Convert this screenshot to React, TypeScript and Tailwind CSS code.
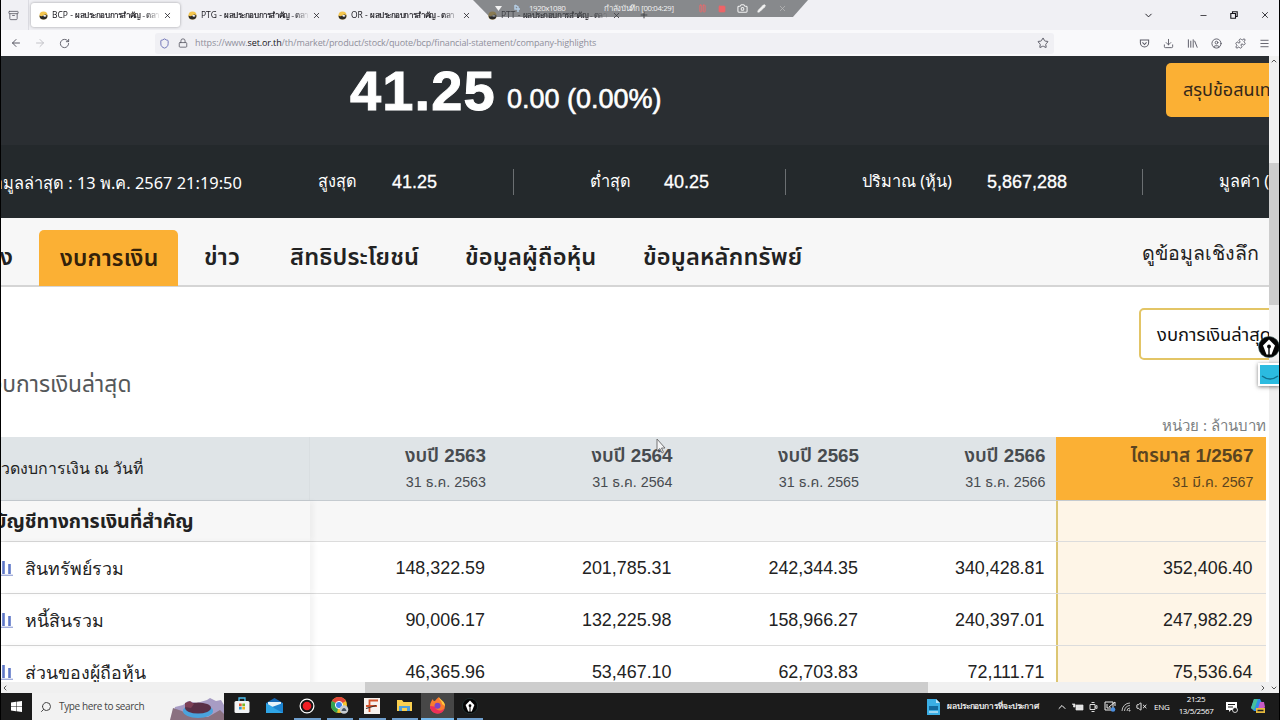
import { ReactNode } from 'react';
import {
  ArrowLeft, ArrowRight, RotateCw, Shield, Lock, Star, X, Plus, Minus, ChevronDown, ChevronUp,
  ChevronLeft, ChevronRight, Pause, Square, Camera, Pencil, Download, CircleUser, Puzzle, Menu, Search,
  Archive, VolumeX,
} from 'lucide-react';

const TABS = [
  { name: 'BCP', width: 'w-[149px]' },
  { name: 'PTG', width: 'w-[150px]' },
  { name: 'OR', width: 'w-[150px]' },
  { name: 'PTT', width: 'w-[150px]' },
];

const YEARS = ['2563', '2564', '2565', '2566'];

const ROWS = [
  { label: 'สินทรัพย์รวม', values: ['148,322.59', '201,785.31', '242,344.35', '340,428.81'], latest: '352,406.40' },
  { label: 'หนี้สินรวม', values: ['90,006.17', '132,225.98', '158,966.27', '240,397.01'], latest: '247,982.29' },
  { label: 'ส่วนของผู้ถือหุ้น', values: ['46,365.96', '53,467.10', '62,703.83', '72,111.71'], latest: '75,536.64' },
];

function SetLogo() {
  return (
    <svg className="shrink-0" width="9" height="9" viewBox="0 0 18 18">
      <circle cx="9" cy="9" r="8" fill="#f4c64e" />
      <path d="M1 9c3 3 7 1 9-1s5-1 7 1a8 8 0 0 1-16 0z" fill="#2b2a29" />
      <path d="M8 9c2-2 6-1 7 1-2 2-5 2-7-1z" fill="#fff" />
    </svg>
  );
}

function PenBadge({ size }: { size: number }) {
  return (
    <svg className="shrink-0" width={size} height={size} viewBox="0 0 22 22">
      <circle cx="11" cy="11" r="10.500" fill="#050505" stroke="#3b5a5a" strokeWidth=".6" />
      <path d="M11 3.500l6 6-3.500 9h-5L5 9.500z" fill="#fff" />
      <path d="M11 11v8" stroke="#050505" strokeWidth="1.400" />
      <circle cx="11" cy="10.500" r="1.900" fill="#050505" />
    </svg>
  );
}

function BrowserTabs() {
  return (
    <div className="relative flex h-[30px] shrink-0 items-center bg-[#f0f0f4] text-[#15141a]">
      <div className="flex h-[30px] w-[28px] shrink-0 items-center border-r border-[#dcdce2] pl-[7px]">
        <Archive size={11} strokeWidth={1.8} className="text-[#5b5b66]" />
      </div>
      {TABS.map((tab, index) => (
        <div
          key={tab.name}
          className={`${tab.width} flex h-[24px] shrink-0 items-center rounded-[3px] pl-[8px] ${index === 0 ? 'ml-[2px] bg-white shadow-[0_0_3px_rgba(0,0,0,0.35)]' : ''}`}
        >
          <SetLogo />
          <span className="ml-[4px] w-[111px] whitespace-nowrap font-['Open_Sans','Noto_Sans',sans-serif] text-[8.5px] [mask-image:linear-gradient(90deg,#000_82%,transparent_98%)]">
            {tab.name} - <span className="text-[8px] tracking-[-0.45px] [-webkit-text-stroke:0.2px_currentColor]">ผลประกอบการสำคัญ - ตลา</span>
          </span>
          <X size={9} strokeWidth={2} className="shrink-0" />
        </div>
      ))}
      <Plus size={10} className="ml-[9px]" />
      <div className="flex flex-1 items-center justify-end pr-[9px]">
        <ChevronDown size={11} className="mr-[45px]" />
        <Minus size={9} className="mr-[22px]" />
        <svg className="mr-[22px]" width="8" height="8" viewBox="0 0 8 8" fill="none" stroke="currentColor" strokeWidth="1.100">
          <path d="M.8 2.500h4.700v4.700H.8zM2.500 2.500V.8h4.700v4.700H5.500" />
        </svg>
        <X size={10} />
      </div>

      {/* Recorder overlay */}
      <div className="absolute left-[472px] top-0 flex h-[17px] w-[335px] items-center bg-[#4e5254]/65 pl-[22px] text-[#f2f2f2] [clip-path:polygon(0_0,100%_0,95.5%_100%,5%_100%)]">
        <svg className="shrink-0" width="8" height="5" viewBox="0 0 8 5"><path d="M0 0h7L3.500 5z" fill="#f2f2f2" /></svg>
        <svg className="ml-[11px] shrink-0" width="7" height="9" viewBox="0 0 7 9"><path d="M1 1l3 2v5M1 1v4h5" stroke="#b4cde4" fill="none" strokeWidth="1.500" /></svg>
        <span className="ml-[8px] w-[75px] shrink-0 pb-px font-['Open_Sans',sans-serif] text-[8px] tracking-[-0.5px]">1920x1080</span>
        <span className="w-[94px] shrink-0 whitespace-nowrap font-['Open_Sans','Noto_Sans',sans-serif] text-[7.8px] tracking-[-0.35px]">กำลังบันทึก [00:04:29]</span>
        <Pause size={9} className="shrink-0 text-[#e86b6d]" strokeWidth={2.5} />
        <Square size={8} className="ml-[11px] shrink-0 fill-[#ed6468] text-[#ed6468]" />
        <Camera size={11} className="ml-[11px] shrink-0" strokeWidth={2.3} />
        <Pencil size={9} className="ml-[9px] shrink-0 fill-current" />
        <X size={9} className="ml-[12px] shrink-0 text-[#b9b9b9]" />
      </div>
    </div>
  );
}

function AddressBar() {
  return (
    <div className="flex h-[26px] shrink-0 items-center bg-[#f9f9fb] text-[#5b5b66]">
      <ArrowLeft size={12} className="ml-[9px]" />
      <ArrowRight size={12} className="ml-[12px] text-[#c3c3c8]" />
      <RotateCw size={11} className="ml-[13px]" />
      <div className="ml-[85px] flex h-[21px] w-[899px] shrink-0 items-center rounded-[3px] bg-[#f0f0f4] pl-[4px]">
        <Shield size={11} className="text-[#6a6fb5]" />
        <Lock size={10} className="ml-[8px]" />
        <span className="ml-[7px] flex-1 whitespace-nowrap font-['Open_Sans',sans-serif] text-[9px] tracking-[-0.12px] text-[#8f8f9b]">
          https://www.<span className="text-[#15141a]">set.or.th</span>/th/market/product/stock/quote/bcp/financial-statement/company-highlights
        </span>
        <Star size={12} className="mr-[5px]" />
      </div>
      <div className="flex flex-1 items-center justify-end gap-[13px] pr-[9px]">
        <svg width="11" height="11" viewBox="0 0 16 16" fill="none" stroke="currentColor" strokeWidth="1.500"><path d="M2 3h12v4a6 6 0 0 1-12 0zM5 6.500l3 3 3-3" /></svg>
        <Download size={11} />
        <svg width="11" height="11" viewBox="0 0 16 16" fill="none" stroke="currentColor" strokeWidth="1.400"><path d="M2 2v12M5.500 4v10M9 2v12M11 4l4 10" /></svg>
        <CircleUser size={11} />
        <Puzzle size={11} />
        <Menu size={11} />
      </div>
    </div>
  );
}

interface StatProps {
  label: string;
  value: string;
  labelWidth: string;
  width: string;
  pad?: string;
}

function Stat({ label, value, labelWidth, width, pad = '' }: StatProps) {
  return (
    <div className={`${width} ${pad} flex h-[26px] shrink-0 items-center border-r border-[#6b6f72]`}>
      <span className={`${labelWidth} shrink-0`}>{label}</span>
      <span className="pt-[2px] font-['Liberation_Sans',sans-serif] text-[18px] [-webkit-text-stroke:0.3px_#fff]">{value}</span>
    </div>
  );
}

function Quote() {
  return (
    <div className="h-[162px] shrink-0 bg-[#24292c] text-white">
      <div className="flex h-[89px] bg-[#2a2e32]">
        <div className="flex w-[1165px] shrink-0 items-baseline pl-[349px] pt-px">
          <span className="w-[157px] font-['Liberation_Sans',sans-serif] text-[56px] font-bold leading-[68px] tracking-[1.1px] [-webkit-text-stroke:1px_#fff]">41.25</span>
          <span className="relative top-[-2px] whitespace-nowrap font-['Liberation_Sans',sans-serif] text-[27px] [-webkit-text-stroke:0.6px_#fff]">0.00 (0.00%)</span>
        </div>
        <div className="mt-[7px] h-[54px] w-[180px] shrink-0 rounded-[5px] bg-[#fbb034] pl-[17px] text-[18px] leading-[52px] text-[#33271a]">
          สรุปข้อสนเทศ
        </div>
      </div>
      <div className="flex h-[73px] items-center whitespace-nowrap font-['Noto_Sans',sans-serif] text-[16.3px]">
        <div className="flex w-[317px] shrink-0 pt-[3px] text-[16.4px]">
          <span className="ml-[-19px]">ข้อมูลล่าสุด : 13 พ.ค. 2567 21:19:50</span>
        </div>
        <Stat label="สูงสุด" value="41.25" labelWidth="w-[74px]" width="w-[196px]" />
        <Stat label="ต่ำสุด" value="40.25" labelWidth="w-[74px]" width="w-[196px]" pad="ml-[76px]" />
        <Stat label="ปริมาณ (หุ้น)" value="5,867,288" labelWidth="w-[125px]" width="w-[281px]" pad="ml-[76px]" />
        <span className="ml-[76px]">มูลค่า (บาท)</span>
      </div>
    </div>
  );
}

function SectionNav() {
  return (
    <div className="flex h-[69px] shrink-0 items-end whitespace-nowrap border-b-2 border-[#d5d5d5] bg-[#f7f7f7] text-[23.6px] font-semibold tracking-[0.2px] text-[#222]">
      <div className="flex h-[56px] w-[38px] shrink-0 items-center justify-end pr-[26px]">ย้อนหลัง</div>
      <div className="-mb-px flex h-[56px] w-[139px] shrink-0 items-center rounded-t-[5px] bg-[#fbb034] pb-[2px] pl-[21px] text-[23px] text-[#33210a]">งบการเงิน</div>
      <div className="flex h-[56px] w-[112px] shrink-0 items-center pl-[26px]">ข่าว</div>
      <div className="flex h-[56px] w-[175px] shrink-0 items-center">สิทธิประโยชน์</div>
      <div className="flex h-[56px] w-[178px] shrink-0 items-center">ข้อมูลผู้ถือหุ้น</div>
      <div className="flex h-[56px] w-[499px] shrink-0 items-center">ข้อมูลหลักทรัพย์</div>
      <div className="flex h-[64px] shrink-0 items-center font-['Noto_Sans',sans-serif] text-[19.6px] font-normal tracking-normal">ดูข้อมูลเชิงลึก</div>
    </div>
  );
}

function Cell({ children, className = '' }: { children?: ReactNode; className?: string }) {
  return <div className={`flex w-[186.5px] shrink-0 flex-col items-end justify-center ${className}`}>{children}</div>;
}

function Statement() {
  return (
    <div className="flex h-[395px] shrink-0 flex-col overflow-hidden bg-white text-[#222]">
      <div className="flex h-[73px] shrink-0 items-end">
        <div className="ml-[1138px] flex h-[52px] w-[160px] shrink-0 items-center whitespace-nowrap rounded-[5px] border-2 border-[#e3c566] pl-[16px] text-[18.4px] text-[#111]">
          งบการเงินล่าสุด
        </div>
      </div>
      <div className="ml-[-11px] flex h-[52px] shrink-0 items-center whitespace-nowrap pb-[4px] text-[22.8px] text-[#55585a]">งบการเงินล่าสุด</div>
      <div className="flex h-[25px] shrink-0 items-center justify-end pr-[3px] pt-px font-['Noto_Sans',sans-serif] text-[15px] text-[#7b7f82]">หน่วย : ล้านบาท</div>

      {/* Financial table */}
      <div className="flex h-[64px] w-[1265px] shrink-0 whitespace-nowrap border-b border-[#c5cbd0] bg-[#dfe4e7] font-['Liberation_Sans','Noto_Sans_Thai',sans-serif]">
        <div className="flex w-[309px] shrink-0 items-center border-r border-[#d9dee1] font-['Noto_Sans',sans-serif] text-[15.9px]">
          <span className="ml-[-8px]">งวดงบการเงิน ณ วันที่</span>
        </div>
        {YEARS.map((year) => (
          <Cell key={year} className="pr-[10.5px] text-[#474b4f]">
            <div className="text-[18.8px] font-semibold leading-[28px]">งบปี {year}</div>
            <div className="text-[14.3px] leading-[25px]">31 ธ.ค. {year}</div>
          </Cell>
        ))}
        <div className="flex flex-1 flex-col items-end justify-center bg-[#fbb034] pr-[12.5px] text-[#5a4420]">
          <div className="text-[19px] font-semibold leading-[28px]">ไตรมาส 1/2567</div>
          <div className="text-[14.3px] leading-[25px]">31 มี.ค. 2567</div>
        </div>
      </div>
      <div className="flex h-[41px] w-[1265px] shrink-0 border-b border-[#dcdcdc] bg-[#f7f7f7]">
        <div className="flex w-[309px] shrink-0 items-center whitespace-nowrap shadow-[4px_0_5px_rgba(0,0,0,0.04)]">
          <span className="ml-[-7px] text-[19.6px] font-bold">บัญชีทางการเงินที่สำคัญ</span>
        </div>
        <div className="w-[746px] shrink-0" />
        <div className="flex-1 border-l-2 border-[#dcc672] bg-[#fef5e7]" />
      </div>
      {ROWS.map((row) => (
        <div key={row.label} className="flex h-[52px] w-[1265px] shrink-0 border-b border-[#dcdcdc]">
          <div className="flex w-[309px] shrink-0 items-center whitespace-nowrap pt-[2px] font-['Noto_Sans',sans-serif] text-[17.8px] shadow-[4px_0_5px_rgba(0,0,0,0.05)]">
            <svg className="mb-[2px] mr-[12px] shrink-0" width="12" height="16" viewBox="0 0 12 16">
              <path d="M0 15.300h12" stroke="#a3aedb" strokeWidth="1.400" />
              <path d="M2.500 1v13M8.500 4v10" stroke="#5f78c8" strokeWidth="2.600" />
            </svg>
            {row.label}
          </div>
          {row.values.map((value) => (
            <Cell key={value} className="pr-[11.5px] pt-[2px] font-['Liberation_Sans',sans-serif] text-[17.9px]">{value}</Cell>
          ))}
          <div className="flex flex-1 items-center justify-end border-l-2 border-[#dcc672] bg-[#fef5e7] pr-[13.5px] pt-[2px] font-['Liberation_Sans',sans-serif] text-[17.9px]">
            {row.latest}
          </div>
        </div>
      ))}
    </div>
  );
}

function TaskIcon({ children, className = '' }: { children: ReactNode; className?: string }) {
  return <div className={`mx-[3px] flex h-[27px] w-[26.5px] shrink-0 items-center justify-center border-b-2 ${className}`}>{children}</div>;
}

function Taskbar() {
  return (
    <div className="flex h-[27px] shrink-0 items-center bg-[#1b1b1b] font-['Open_Sans','Noto_Sans',sans-serif] text-white">
      <div className="flex w-[31px] shrink-0 justify-center">
        <svg width="11" height="11" viewBox="0 0 11 11"><path d="M0 1.500l5-.7v4.500H0zM5.500.7L11 0v5.300H5.500zM0 5.800h5v4.500l-5-.7zM5.500 5.800H11V11l-5.500-.7z" fill="#fff" /></svg>
      </div>
      <div className="flex h-[27px] w-[192px] shrink-0 items-center bg-[#f2f2f2] pl-[8px] text-[#444]">
        <Search size={12} className="-scale-x-100" />
        <span className="ml-[7px] flex-1 whitespace-nowrap text-[10px] tracking-[-0.36px]">Type here to search</span>
        <svg width="54" height="27" viewBox="0 0 54 27">
          <path d="M2 27l3-13 8-2 5-4 9 2 10-3 3-2 6 3 5-1 3 5v15z" fill="#a79cc4" />
          <path d="M0 27l3-12 9 3 6 5 20 1 12-7 4 4v6z" fill="#8a7180" />
          <ellipse cx="28" cy="18" rx="15" ry="7" fill="#4aa3dd" />
          <ellipse cx="28" cy="15" rx="13" ry="5.500" fill="#593047" />
          <path d="M15 10l5-2 4 3-3 4-6-1z" fill="#7c3f55" />
        </svg>
      </div>
      <TaskIcon className="ml-[5px] border-transparent">
        <svg width="16" height="17" viewBox="0 0 16 17">
          <path d="M5 4V1h6v3" stroke="#4cc0ee" strokeWidth="1.300" fill="none" />
          <rect x="0.500" y="4" width="15" height="12" rx="1.500" fill="#f2f4f5" />
          <path d="M5 6.500h2.700v2.700H5z" fill="#e8562a" /><path d="M8.300 6.500H11v2.700H8.300z" fill="#76b82a" />
          <path d="M5 9.800h2.700v2.700H5z" fill="#2d9bd8" /><path d="M8.300 9.800H11v2.700H8.300z" fill="#f2b51d" />
        </svg>
      </TaskIcon>
      <TaskIcon className="border-transparent">
        <svg width="17" height="15" viewBox="0 0 17 15">
          <path d="M0 5l8.500-5L17 5v10H0z" fill="#1668b5" /><path d="M2 4h13v6H2z" fill="#e6f2fa" />
          <path d="M0 5l8.500 5L17 5v10H0z" fill="#2fa5e6" /><path d="M17 5v10L6 9z" fill="#1c83d0" />
        </svg>
      </TaskIcon>
      <TaskIcon className="border-[#6f9fce]">
        <svg width="16" height="16" viewBox="0 0 17 17"><circle cx="8.500" cy="8.500" r="7.300" fill="#171717" stroke="#fff" strokeWidth="1.300" /><circle cx="8.500" cy="8.500" r="4.600" fill="#f01e24" /></svg>
      </TaskIcon>
      <TaskIcon className="border-[#6f9fce]">
        <svg width="18" height="17" viewBox="0 0 18 17">
          <circle cx="8" cy="8" r="8" fill="#f7c52d" />
          <path d="M8 8L1 4a8 8 0 0 1 14 0z" fill="#e3473a" /><path d="M8 8L1 4a8 8 0 0 0 5 11.800z" fill="#35a352" />
          <circle cx="8" cy="8" r="3.600" fill="#3e82ee" stroke="#fff" />
          <circle cx="13" cy="12.500" r="4.300" fill="#c6cbd0" /><path d="M10.500 14c1-4 4-4 5 0z" fill="#455261" />
        </svg>
      </TaskIcon>
      <TaskIcon className="border-[#6f9fce]">
        <svg width="16" height="16" viewBox="0 0 16 16"><path d="M0 0h16v16H0z" fill="#f7f2ee" /><path d="M5.500 14V2.500H14M2 8h11" stroke="#d4542c" strokeWidth="1.800" fill="none" /><path d="M2 10.500l10-3" stroke="#40302b" strokeWidth="1.200" /></svg>
      </TaskIcon>
      <TaskIcon className="border-[#6f9fce]">
        <svg width="15" height="13" viewBox="0 0 15 13"><path d="M0 1h5l1.500 2H15v9H0z" fill="#f9cf50" /><path d="M2 7h11v5H2z" fill="#4e9fdc" /><path d="M5 9h5v3H5z" fill="#f9cf50" /></svg>
      </TaskIcon>
      <div className="flex h-[27px] w-[32.5px] shrink-0 items-center justify-center border-b-2 border-[#76b9ed] bg-[#474747]">
        <svg width="17" height="17" viewBox="0 0 17 17">
          <path d="M1 9C1 6 3 3 4 2c0 2 1 2 2 2 1-1 2-3 4-4 0 2 6 4 6 9a7.500 7.500 0 0 1-15 0z" fill="#fb7b2f" />
          <path d="M1 9c0 4 3 7.500 7.500 7.500 4 0 6-2 7-5-3 3-8 3-10-2z" fill="#ed2f5b" />
          <path d="M10 0c0 3 3 4 3 7l3 2c0-5-6-7-6-9z" fill="#fecb3d" /><circle cx="8.500" cy="8.800" r="3" fill="#7b45c8" />
        </svg>
      </div>
      <TaskIcon className="border-[#6f9fce]"><PenBadge size={16} /></TaskIcon>
      <div className="flex flex-1 items-center justify-end whitespace-nowrap">
        <svg width="13" height="16" viewBox="0 0 13 16"><path d="M0 0h9l4 4v12H0z" fill="#3aaee5" /><path d="M9 0v4h4z" fill="#b9e5fa" /><path d="M2 7h9v4H2z" fill="#13699e" /><path d="M2 13h9" stroke="#fff" /></svg>
        <span className="ml-[7px] w-[109px] text-[8.3px] tracking-[-0.1px] [-webkit-text-stroke:0.2px_currentColor]">ผลประกอบการที่จะประกาศ</span>
        <ChevronUp size={12} />
        <svg className="ml-[4px]" width="12" height="8" viewBox="0 0 12 8"><path d="M0 1h3v3H1.500V2.500M4 2h7v5H4zM5 3.200h5v2.600H5z" fill="#ddd" stroke="#eee" strokeWidth=".7" /></svg>
        <svg className="ml-[5px]" width="9" height="12" viewBox="0 0 9 12" fill="none" stroke="#ddd"><path d="M1 3.500h5v5H1zM6 5.500l2-1v3l-2-1M2.500 1.500h3M2.500 10.500h3" /></svg>
        <svg className="ml-[6px]" width="12" height="11" viewBox="0 0 12 11"><path d="M1 1h8v8H1zM3 3v4h4" fill="none" stroke="#eee" /><path d="M5 6l6-5v4" fill="none" stroke="#eee" /><circle cx="9" cy="8.500" r="2.300" fill="#4b8fe0" /></svg>
        <svg className="ml-[5px]" width="10" height="10" viewBox="0 0 10 10" fill="none" stroke="#bbb"><path d="M1 9a8 8 0 0 1 8-8M3.500 9A5.500 5.500 0 0 1 9 3.500M6 9a3 3 0 0 1 3-3" /><circle cx="8.500" cy="8.500" r=".6" fill="#bbb" /></svg>
        <VolumeX size={11} className="ml-[5px]" />
        <span className="ml-[7px] w-[23px] text-[8px] tracking-[-0.2px]">ENG</span>
        <div className="flex w-[38px] flex-col items-center pb-[3px] text-[8px] leading-[12px] tracking-[-0.35px]">
          <span>21:25</span>
          <span>13/5/2567</span>
        </div>
        <svg className="ml-[11px]" width="12" height="12" viewBox="0 0 12 12"><path d="M0 1h11v8H5l-2 2V9H0z" fill="#fff" /><path d="M2 3.500h7M2 6h5" stroke="#1b1b1b" /><circle cx="9" cy="9" r="2.500" fill="#1b1b1b" stroke="#fff" strokeWidth=".8" /></svg>
        <svg className="ml-[13px] mr-[13px]" width="15" height="15" viewBox="0 0 15 15"><path d="M3 0h6l2 4-3 8H3L0 9z" fill="#2f8fe8" /><path d="M3 0h4L3 11 0 9z" fill="#46c09b" /><path d="M9 3h4l1 5-3 5H6z" fill="#c75ac7" /><path d="M5 9h9v5H5z" fill="#e5b93c" /><path d="M6.500 11.500h6" stroke="#222" strokeWidth="1.500" /></svg>
      </div>
    </div>
  );
}

function App() {
  return (
    <div className="relative flex h-[720px] w-[1280px] flex-col overflow-hidden border-x border-black bg-white font-['Noto_Sans','Noto_Sans_Thai',sans-serif]">
      <BrowserTabs />
      <AddressBar />
      <div className="flex h-[626px] shrink-0">
        <div className="flex w-[1268px] shrink-0 flex-col overflow-hidden">
          <Quote />
          <SectionNav />
          <Statement />
        </div>
        <div className="flex flex-1 flex-col items-center bg-[#f0f0f0] pt-[1px] text-[#555]">
          <ChevronUp size={8} strokeWidth={3} />
          <div className="mt-[98px] h-[142px] w-full bg-[#cdcdcd]" />
        </div>
      </div>
      <div className="flex h-[11px] shrink-0 items-center bg-[#f0f0f0] text-[#555]">
        <ChevronLeft size={8} strokeWidth={3} />
        <div className="ml-[356px] h-[11px] w-[563px] bg-[#cdcdcd]" />
        <ChevronRight size={8} strokeWidth={3} className="ml-[331px]" />
        <ChevronDown size={8} strokeWidth={3} className="ml-[3px]" />
      </div>
      <Taskbar />

      {/* Floating extension buttons */}
      <div className="absolute left-[1257px] top-[336px]"><PenBadge size={22} /></div>
      <div className="absolute left-[1257px] top-[363px] h-[23px] w-[22px] border-2 border-r-0 border-white bg-[#2bbbe0] shadow-[0_1px_4px_rgba(0,0,0,0.5)]">
        <svg width="20" height="19" viewBox="0 0 20 19"><path d="M2 11q8 6 16 0" stroke="#12718e" strokeWidth="1.500" fill="none" /></svg>
      </div>
      <svg className="absolute left-[655px] top-[438px]" width="10" height="16" viewBox="0 0 10 16">
        <path d="M1 1v12l2.800-2.500L6 15l1.500-.8-2-4.200H9z" fill="#f4f5f6" stroke="#666" strokeWidth=".9" />
      </svg>
    </div>
  );
}

export default App;
